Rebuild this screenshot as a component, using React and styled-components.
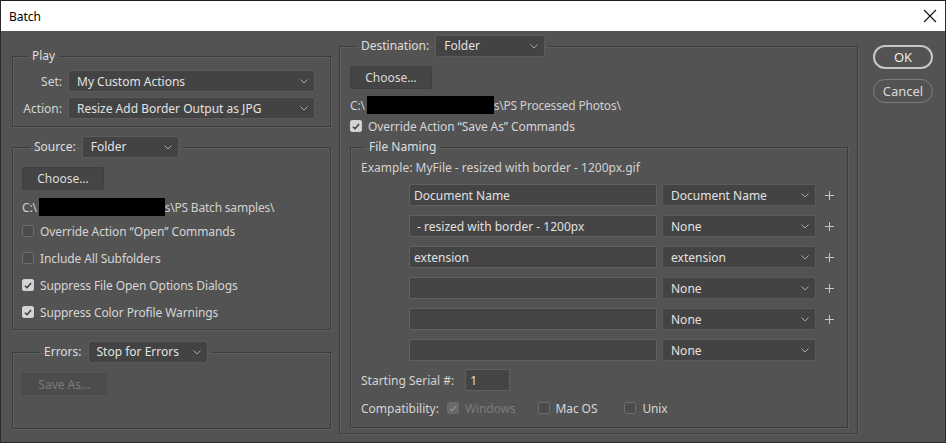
import React from "react";
import styled, { createGlobalStyle } from "styled-components";

const GlobalStyle = createGlobalStyle`
  html, body {
    margin: 0;
    background: #535353;
  }
  body {
    font-family: "Noto Sans", "Open Sans", sans-serif;
    font-size: 12px;
    color: #d8d8d8;
  }
  * { box-sizing: border-box; }
`;

const Dialog = styled.div`
  width: 946px;
  height: 443px;
  display: flex;
  flex-direction: column;
  background: #535353;
  border: 1px solid #2c2c2c;
  border-top-color: #1e1e1e;
`;

const TitleBar = styled.div`
  height: 30px;
  flex: none;
  display: flex;
  align-items: center;
  justify-content: space-between;
  background: #ffffff;
  color: #000;
  padding: 0 8px 0 8px;
  font-size: 12px;
`;

const CloseIcon = () => (
  <svg width="14" height="14" viewBox="0 0 14 14">
    <path d="M1 1 L13 13 M13 1 L1 13" stroke="#111" strokeWidth="1.1" fill="none" />
  </svg>
);

const Body = styled.div`
  flex: 1;
  display: flex;
  align-items: flex-start;
  padding: 4px 12px 0 11px;
`;

const LeftColumn = styled.div`
  width: 319px;
  flex: none;
  display: flex;
  flex-direction: column;
  padding-top: 12px;
`;

const Group = styled.fieldset`
  margin: 0;
  min-width: 0;
  border: 1px solid #3d3d3d;
  box-shadow: 1px 1px 0 #5e5e5e, inset 1px 1px 0 #5e5e5e;
  padding: ${(p) => p.$pad || "5px 15px 7px 9px"};
  margin-top: ${(p) => p.$top || 0}px;
`;

const Legend = styled.legend`
  margin-left: ${(p) => p.$offset || 0}px;
  padding: 0 4px;
  line-height: 18px;
  font-size: 12px;
  color: #dedede;
  display: flex;
  align-items: center;
  gap: 6px;
`;

const FormGrid = styled.div`
  display: grid;
  grid-template-columns: 40px 247px;
  column-gap: 6px;
  row-gap: 5px;
  align-items: center;
`;

const FieldLabel = styled.span`
  text-align: right;
  color: #d4d4d4;
  white-space: nowrap;
`;

const SelectBox = styled.div`
  width: ${(p) => p.$w}px;
  height: 22px;
  display: flex;
  align-items: center;
  justify-content: space-between;
  padding: 0 6px 0 8px;
  background: #434343;
  border: 1px solid #5b5b5b;
  border-radius: 2px;
  color: #e2e2e2;
  font-size: 12px;
  white-space: nowrap;
`;

const Chevron = () => (
  <svg width="8" height="5" viewBox="0 0 8 5">
    <polyline points="0.5,0.5 4,4 7.5,0.5" stroke="#a8a8a8" strokeWidth="1" fill="none" />
  </svg>
);

const Select = ({ w, children }) => (
  <SelectBox $w={w}>
    <span>{children}</span>
    <Chevron />
  </SelectBox>
);

const Button = styled.div`
  width: ${(p) => p.$w}px;
  height: ${(p) => p.$h || 23}px;
  display: flex;
  align-items: center;
  justify-content: center;
  background: ${(p) => (p.$disabled ? "#4c4c4c" : "#454545")};
  border: 1px solid ${(p) => (p.$disabled ? "#4a4a4a" : "#404040")};
  border-radius: 2px;
  color: ${(p) => (p.$disabled ? "#7a7a7a" : "#dcdcdc")};
  font-size: 12px;
  margin-top: ${(p) => p.$top || 0}px;
`;

const PathLine = styled.div`
  height: 18px;
  display: flex;
  align-items: center;
  margin-top: ${(p) => p.$top || 0}px;
  color: #d0d0d0;
  white-space: nowrap;
  letter-spacing: -0.2px;
`;

const Redacted = styled.span`
  display: inline-block;
  width: ${(p) => p.$w}px;
  height: 18px;
  background: #000;
  margin-left: 2px;
`;

const CheckList = styled.div`
  display: flex;
  flex-direction: column;
  gap: 9px;
  margin-top: ${(p) => p.$top || 0}px;
`;

const CheckRow = styled.label`
  height: 18px;
  display: flex;
  align-items: center;
  gap: 6px;
  color: ${(p) => (p.$disabled ? "#7b7b7b" : "#d6d6d6")};
  white-space: nowrap;
  letter-spacing: -0.1px;
  margin-left: ${(p) => p.$indent || 0}px;
  margin-top: ${(p) => p.$top || 0}px;
`;

const Box = styled.span`
  width: 12px;
  height: 12px;
  flex: none;
  display: flex;
  align-items: center;
  justify-content: center;
  border-radius: 2px;
  border: 1px solid ${(p) => (p.$checked ? (p.$disabled ? "#6a6a6a" : "#cfcfcf") : "#6c6c6c")};
  background: ${(p) => (p.$checked ? (p.$disabled ? "#696969" : "#d4d4d4") : "#4b4b4b")};
`;

const CheckBox = ({ checked, disabled }) => (
  <Box $checked={checked} $disabled={disabled}>
    {checked && (
      <svg width="8" height="7" viewBox="0 0 9 8">
        <polyline
          points="1,4.2 3.4,6.5 8,1.2"
          stroke={disabled ? "#8e8e8e" : "#3a3a3a"}
          strokeWidth="1.7"
          fill="none"
        />
      </svg>
    )}
  </Box>
);

const Check = ({ checked, disabled, children, indent, top }) => (
  <CheckRow $disabled={disabled} $indent={indent} $top={top}>
    <CheckBox checked={checked} disabled={disabled} />
    <span>{children}</span>
  </CheckRow>
);

const Destination = styled(Group)`
  width: 519px;
  flex: none;
  margin-left: 8px;
`;

const ExampleLine = styled.div`
  height: 18px;
  line-height: 18px;
  color: #d2d2d2;
  white-space: nowrap;
`;

const NameRows = styled.div`
  display: flex;
  flex-direction: column;
  gap: 9px;
  margin: 7px 0 0 48px;
`;

const NameRow = styled.div`
  display: flex;
  align-items: center;
  gap: 5px;
`;

const TextInput = styled.div`
  width: ${(p) => p.$w}px;
  height: 22px;
  display: flex;
  align-items: center;
  padding: 0 4px;
  background: #444444;
  border: 1px solid #606060;
  border-radius: 1px;
  color: #e0e0e0;
  white-space: pre;
`;

const PlusWrap = styled.span`
  display: flex;
  margin-left: 4px;
`;

const Plus = () => (
  <PlusWrap>
    <svg width="9" height="9" viewBox="0 0 9 9">
      <path d="M4.5 0 V9 M0 4.5 H9" stroke="#c4c4c4" strokeWidth="1" fill="none" />
    </svg>
  </PlusWrap>
);

const InlineRow = styled.div`
  display: flex;
  align-items: center;
  gap: ${(p) => p.$gap || 6}px;
  margin-top: ${(p) => p.$top || 0}px;
`;

const ActionColumn = styled.div`
  width: 60px;
  flex: none;
  margin-left: 15px;
  padding-top: 10px;
  display: flex;
  flex-direction: column;
  gap: 10px;
`;

const PillButton = styled.div`
  height: 24px;
  display: flex;
  align-items: center;
  justify-content: center;
  border-radius: 12px;
  border: ${(p) => (p.$primary ? "2px solid #c6c6c6" : "1px solid #7c7c7c")};
  color: ${(p) => (p.$primary ? "#ececec" : "#dadada")};
  font-size: 13px;
`;

const nameRows = [
  { text: "Document Name", pick: "Document Name", plus: true },
  { text: " - resized with border - 1200px", pick: "None", plus: true },
  { text: "extension", pick: "extension", plus: true },
  { text: "", pick: "None", plus: true },
  { text: "", pick: "None", plus: true },
  { text: "", pick: "None", plus: false },
];

export default function App() {
  return (
    <>
      <GlobalStyle />
      <Dialog>
        <TitleBar>
          <span>Batch</span>
          <CloseIcon />
        </TitleBar>
        <Body>
          <LeftColumn>
            <Group>
              <Legend $offset={6}>Play</Legend>
              <FormGrid>
                <FieldLabel>Set:</FieldLabel>
                <Select w={247}>My Custom Actions</Select>
                <FieldLabel>Action:</FieldLabel>
                <Select w={247}>Resize Add Border Output as JPG</Select>
              </FormGrid>
            </Group>

            <Group $top={9} $pad="9px 15px 8px 9px">
              <Legend $offset={8}>
                Source:
                <Select w={97}>Folder</Select>
              </Legend>
              <Button $w={82}>Choose...</Button>
              <PathLine $top={8}>
                C:\<Redacted $w={126} />s\PS Batch samples\
              </PathLine>
              <CheckList $top={6}>
                <Check>Override Action “Open” Commands</Check>
                <Check>Include All Subfolders</Check>
                <Check checked>Suppress File Open Options Dialogs</Check>
                <Check checked>Suppress Color Profile Warnings</Check>
              </CheckList>
            </Group>

            <Group $top={11} $pad="10px 15px 33px 9px">
              <Legend $offset={18}>
                Errors:
                <Select w={120}>Stop for Errors</Select>
              </Legend>
              <Button $w={85} $h={22} $disabled>
                Save As...
              </Button>
            </Group>
          </LeftColumn>

          <Destination $pad="9px 9px 5px 10px">
            <Legend $offset={7}>
              Destination:
              <Select w={110}>Folder</Select>
            </Legend>
            <Button $w={82}>Choose...</Button>
            <PathLine $top={7}>
              C:\<Redacted $w={127} />s\PS Processed Photos\
            </PathLine>
            <Check checked top={3}>
              Override Action “Save As” Commands
            </Check>

            <Group $top={3} $pad="3px 0 10px 10px">
              <Legend $offset={4}>File Naming</Legend>
              <ExampleLine>Example: MyFile - resized with border - 1200px.gif</ExampleLine>
              <NameRows>
                {nameRows.map((row, i) => (
                  <NameRow key={i}>
                    <TextInput $w={248}>{row.text}</TextInput>
                    <Select w={154}>{row.pick}</Select>
                    {row.plus && <Plus />}
                  </NameRow>
                ))}
              </NameRows>
              <InlineRow $top={8} $gap={11}>
                <FieldLabel>Starting Serial #:</FieldLabel>
                <TextInput $w={45}>1</TextInput>
              </InlineRow>
              <InlineRow $top={8} $gap={8}>
                <FieldLabel>Compatibility:</FieldLabel>
                <Check checked disabled>
                  Windows
                </Check>
                <Check indent={14}>Mac OS</Check>
                <Check indent={19}>Unix</Check>
              </InlineRow>
            </Group>
          </Destination>

          <ActionColumn>
            <PillButton $primary>OK</PillButton>
            <PillButton>Cancel</PillButton>
          </ActionColumn>
        </Body>
      </Dialog>
    </>
  );
}
